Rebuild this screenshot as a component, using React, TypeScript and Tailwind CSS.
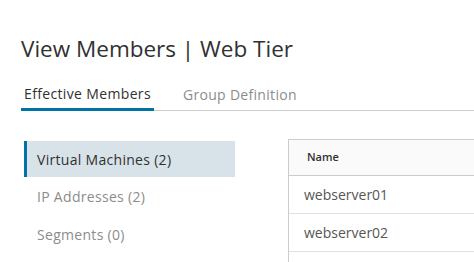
const NAV_ITEMS = [
  { key: "vm", label: "Virtual Machines (2)" },
  { key: "ip", label: "IP Addresses (2)" },
  { key: "seg", label: "Segments (0)" },
];

const ROWS = ["webserver01", "webserver02", ""];

export default function App() {
  const active = "vm";
  return (
    <div
      className="h-[262px] w-[474px] overflow-hidden bg-white"
      style={{ fontFamily: "'Open Sans', 'Liberation Sans', sans-serif" }}
    >
      {/* Title */}
      <h1 className="pl-[21px] pt-[33px] text-[22.5px] leading-[32px] font-normal text-[#313131]">
        View Members | Web Tier
      </h1>

      {/* Tabs */}
      <div className="ml-[21px] mt-[19px] flex border-b border-[#cccccc]">
        <button className="-mb-px w-[133px] border-b-[3px] border-[#0072a3] pb-[4px] pl-[3px] text-left text-[14px] leading-[20px] tracking-[0.35px] text-[#313131]">
          Effective Members
        </button>
        <button className="ml-[29px] pb-[4px] text-[14px] leading-[20px] tracking-[0.3px] text-[#8c8c8c]">
          Group Definition
        </button>
      </div>

      {/* Body */}
      <div className="mt-[30px] flex">
        <nav className="ml-[24px] flex w-[211px] flex-col">
          {NAV_ITEMS.map((item) => (
            <div
              key={item.key}
              className={
                item.key === active
                  ? "flex h-[36px] items-center border-l-[3px] border-[#0072a3] bg-[#d8e3e9] pl-[10px] text-[14px] tracking-[0.3px] text-[#313131]"
                  : "flex h-[38px] items-center pl-[13px] text-[14px] tracking-[0.3px] text-[#8c8c8c]"
              }
            >
              {item.label}
            </div>
          ))}
        </nav>

        <div className="-mt-[2px] ml-[53px] flex-1 border-l border-t border-[#cccccc]">
          <div className="flex h-[36px] items-center border-b border-[#cccccc] bg-[#fafafa] pl-[18px] text-[11px] font-semibold text-[#313131]">
            Name
          </div>
          {ROWS.map((row, i) => (
            <div
              key={i}
              className="flex h-[38px] items-center border-b border-[#e1e1e1] pl-[15px] text-[14px] text-[#565656]"
            >
              {row}
            </div>
          ))}
        </div>
      </div>
    </div>
  );
}
